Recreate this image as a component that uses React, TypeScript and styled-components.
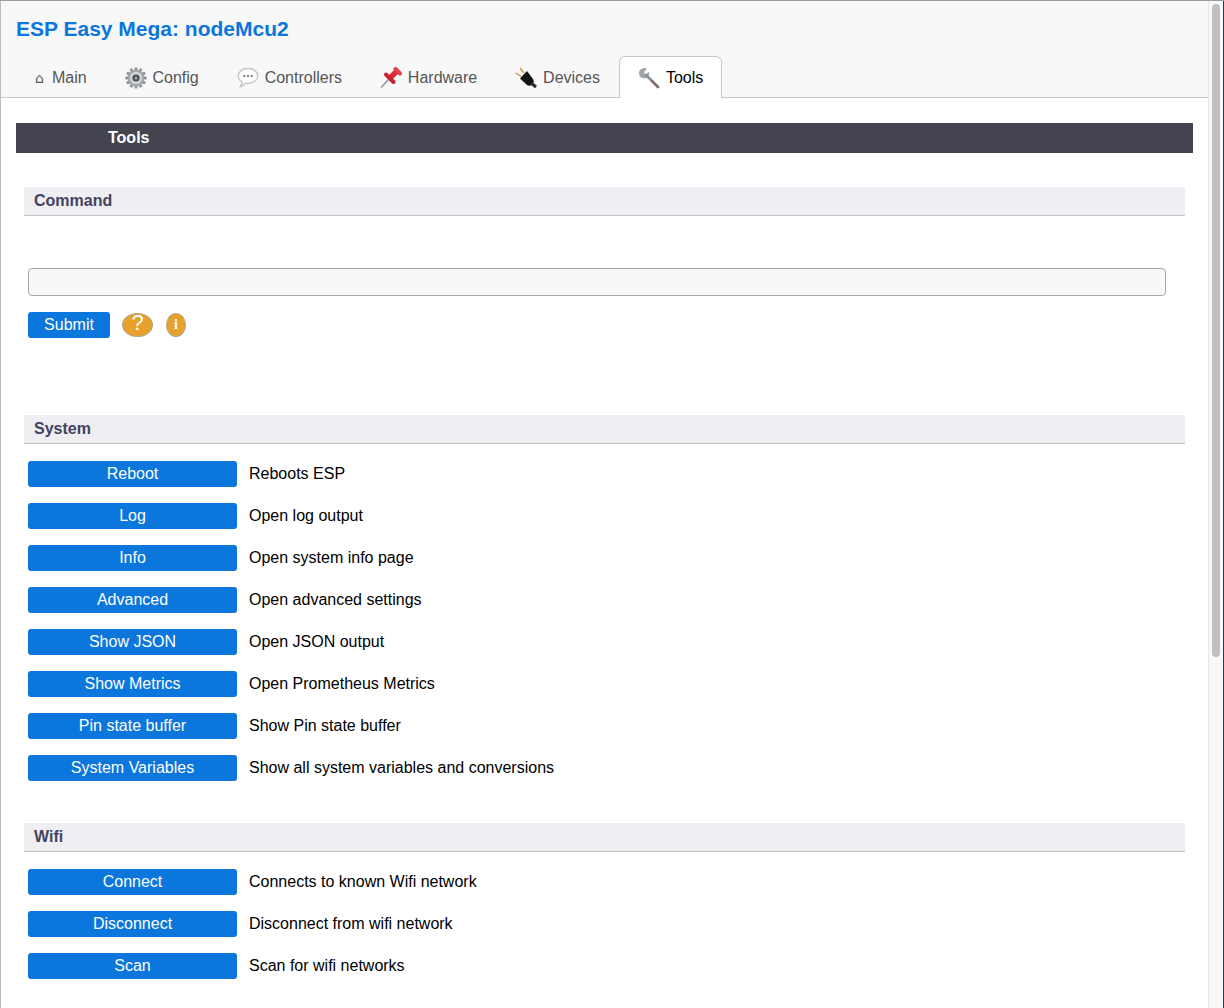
import React from "react";
import styled, { createGlobalStyle } from "styled-components";

const GlobalStyle = createGlobalStyle`
  html, body {
    margin: 0;
    padding: 0;
    height: 100%;
    overflow: hidden;
    background: #fff;
  }
  body {
    font-family: "Liberation Sans", Arial, sans-serif;
    font-size: 16px;
    color: #000;
  }
`;

const teeth = [0, 30, 60, 90, 120, 150, 180, 210, 240, 270, 300, 330];

const GearIcon = () => (
  <svg width="22" height="22" viewBox="0 0 22 22">
    {teeth.map((angle) => (
      <rect
        key={angle}
        x="9.5"
        y="0.4"
        width="3"
        height="5"
        rx="0.8"
        fill="#8f9397"
        transform={`rotate(${angle} 11 11)`}
      />
    ))}
    <circle cx="11" cy="11" r="8.2" fill="#a2a5a9" />
    <circle cx="11" cy="11" r="6.2" fill="#cfd1d3" />
    <circle cx="11" cy="11" r="3.6" fill="#4b4d50" />
    <circle cx="11" cy="11" r="1.5" fill="#a9abad" />
  </svg>
);

const BubbleIcon = () => (
  <svg width="22" height="22" viewBox="0 0 22 22">
    <path
      d="M11 1.500c5.400 0 9.800 3.200 9.800 7.400s-4.400 7.400-9.800 7.400c-.9 0-1.700-.1-2.500-.2-1.200 1.500-3 2.900-5.200 3.500 1-1.300 1.600-3 1.700-4.700C2.800 13.600 1.200 11.400 1.200 8.900c0-4.200 4.400-7.400 9.800-7.400z"
      fill="#fdfdfd"
      stroke="#c4c4c4"
      strokeWidth="1.300"
    />
    <circle cx="7.300" cy="9" r="1.100" fill="#666" />
    <circle cx="11" cy="9" r="1.100" fill="#666" />
    <circle cx="14.700" cy="9" r="1.100" fill="#666" />
  </svg>
);

const PinIcon = () => (
  <svg width="22" height="22" viewBox="0 0 22 22">
    <path d="M1 20.500l7.500-8" stroke="#84919f" strokeWidth="1.300" fill="none" />
    <path d="M16.500 4.500L10 11" stroke="#d92f3b" strokeWidth="5.500" fill="none" />
    <path d="M15.500 2l4.500 4.500" stroke="#e2404a" strokeWidth="4" strokeLinecap="round" fill="none" />
    <path d="M6 7.500l7.500 7.500" stroke="#c9252f" strokeWidth="4" strokeLinecap="round" fill="none" />
  </svg>
);

const PlugIcon = () => (
  <svg width="22" height="22" viewBox="0 0 22 22">
    <path d="M0.500 6l6 3.500M5 1l4 5" stroke="#c39a45" strokeWidth="1.400" fill="none" />
    <path d="M5 11.500l7-7.500 6 8 1 3-4 4-3-1z" fill="#141414" />
    <path d="M16 16l5 4" stroke="#2a2a2a" strokeWidth="3" fill="none" />
  </svg>
);

const WrenchIcon = () => (
  <svg width="22" height="22" viewBox="0 0 22 22">
    <path
      d="M6.200 1C3.200 1 1 3.300 1 6.200c0 3 2.300 5.100 5.100 5.100 3 0 5.100-2.300 5.100-5.100 0-.5-.1-1-.2-1.400L8 7.300 5.800 5.500 8.800 1.700C8 1.200 7.100 1 6.200 1z"
      fill="#a0a5ab"
    />
    <path d="M8.500 8.500l11.500 11.500" stroke="#8a8d92" strokeWidth="2.800" strokeLinecap="round" fill="none" />
    <path d="M14 14l6 6" stroke="#85696d" strokeWidth="2.200" strokeLinecap="round" fill="none" />
  </svg>
);

const tabs: { label: string; glyph?: string; icon?: React.ReactNode; active?: boolean }[] = [
  { label: "Main", glyph: "⌂" },
  { label: "Config", icon: <GearIcon /> },
  { label: "Controllers", icon: <BubbleIcon /> },
  { label: "Hardware", icon: <PinIcon /> },
  { label: "Devices", icon: <PlugIcon /> },
  { label: "Tools", icon: <WrenchIcon />, active: true },
];

const systemRows = [
  ["Reboot", "Reboots ESP"],
  ["Log", "Open log output"],
  ["Info", "Open system info page"],
  ["Advanced", "Open advanced settings"],
  ["Show JSON", "Open JSON output"],
  ["Show Metrics", "Open Prometheus Metrics"],
  ["Pin state buffer", "Show Pin state buffer"],
  ["System Variables", "Show all system variables and conversions"],
];

const wifiRows = [
  ["Connect", "Connects to known Wifi network"],
  ["Disconnect", "Disconnect from wifi network"],
  ["Scan", "Scan for wifi networks"],
];

const App = () => {
  return (
    <>
      <GlobalStyle />
      <Window>
        <Page>
          <Header>
            <Title>ESP Easy Mega: nodeMcu2</Title>
            <TabBar>
              {tabs.map((tab) => (
                <Tab key={tab.label} $active={tab.active}>
                  {tab.glyph ? <Glyph>{tab.glyph}</Glyph> : <TabIcon>{tab.icon}</TabIcon>}
                  {tab.label}
                </Tab>
              ))}
            </TabBar>
          </Header>
          <Main>
            <PageHead>Tools</PageHead>
            <Section>
              <SectionTitle>Command</SectionTitle>
              <CommandBox>
                <CommandInput type="text" />
                <SubmitRow>
                  <SubmitButton>Submit</SubmitButton>
                  <HelpButton>?</HelpButton>
                  <InfoButton>i</InfoButton>
                </SubmitRow>
              </CommandBox>
            </Section>
            <SystemSection>
              <SectionTitle>System</SectionTitle>
              <Rows>
                {systemRows.map(([label, text]) => (
                  <Row key={label}>
                    <WideButton>{label}</WideButton>
                    <RowText>{text}</RowText>
                  </Row>
                ))}
              </Rows>
            </SystemSection>
            <WifiSection>
              <SectionTitle>Wifi</SectionTitle>
              <Rows>
                {wifiRows.map(([label, text]) => (
                  <Row key={label}>
                    <WideButton>{label}</WideButton>
                    <RowText>{text}</RowText>
                  </Row>
                ))}
              </Rows>
            </WifiSection>
          </Main>
        </Page>
        <ScrollTrack>
          <ScrollThumb />
        </ScrollTrack>
      </Window>
    </>
  );
};

export default App;

const Window = styled.div`
  display: flex;
  width: 1224px;
  height: 1008px;
  overflow: hidden;
  border-top: 1px solid #9c9c9c;
  box-sizing: border-box;
`;

const Page = styled.div`
  width: 1208px;
  flex: none;
  border-left: 1px solid #bdbdbd;
  box-sizing: border-box;
`;

const Header = styled.header`
  height: 96px;
  background: #f8f8f8;
  border-bottom: 1px solid #c8c8c8;
  display: flex;
  flex-direction: column;
  justify-content: space-between;
`;

const Title = styled.h1`
  margin: 16px 0 0 15px;
  font-size: 21px;
  line-height: 23px;
  font-weight: 700;
  color: #0b76dc;
`;

const TabBar = styled.nav`
  display: flex;
  padding-left: 15px;
  margin-bottom: -1px;
`;

const Tab = styled.a<{ $active?: boolean }>`
  display: flex;
  align-items: center;
  gap: 6px;
  box-sizing: border-box;
  height: 42px;
  padding: 0 17.95px;
  font-size: 16px;
  color: ${(p) => (p.$active ? "#000" : "#555")};
  background: ${(p) => (p.$active ? "#fff" : "transparent")};
  border: 1px solid ${(p) => (p.$active ? "#c8c8c8" : "transparent")};
  border-bottom: none;
  border-radius: 6px 6px 0 0;
`;

const Glyph = styled.span`
  width: 11px;
  font-family: "DejaVu Sans", sans-serif;
  font-size: 14px;
`;

const TabIcon = styled.span`
  display: flex;
  width: 22px;
  height: 22px;
`;

const Main = styled.main`
  padding: 25px 15px 0;
`;

const PageHead = styled.h2`
  margin: 0;
  height: 30px;
  line-height: 30px;
  padding-left: 92px;
  background: #444450;
  color: #fff;
  font-size: 16px;
  font-weight: 700;
`;

const Section = styled.section`
  margin: 34px 8px 0;
`;

const SystemSection = styled(Section)`
  margin-top: 0;
`;

const WifiSection = styled(Section)`
  margin-top: 42px;
`;

const SectionTitle = styled.h3`
  margin: 0;
  height: 29px;
  line-height: 27px;
  padding-left: 10px;
  box-sizing: border-box;
  background: #eeeef3;
  border-bottom: 1px solid #c4c4c8;
  color: #43435f;
  font-size: 16px;
  font-weight: 700;
`;

const CommandBox = styled.div`
  padding: 52px 4px 0;
  height: 147px;
`;

const CommandInput = styled.input`
  display: block;
  width: 1138px;
  height: 28px;
  padding: 0 6px;
  margin: 0;
  box-sizing: border-box;
  background: #f8f8f8;
  border: 1px solid #a8a8a8;
  border-radius: 4px;
`;

const SubmitRow = styled.div`
  display: flex;
  align-items: center;
  margin-top: 16px;
`;

const BlueButton = styled.button`
  height: 26px;
  padding: 0;
  border: none;
  border-radius: 3px;
  background: #0b76dc;
  color: #fff;
  font-family: inherit;
  font-size: 16px;
  text-align: center;
`;

const SubmitButton = styled(BlueButton)`
  width: 82px;
`;

const WideButton = styled(BlueButton)`
  width: 209px;
  flex: none;
`;

const HelpButton = styled.span`
  width: 31px;
  height: 24px;
  margin-left: 12px;
  box-sizing: border-box;
  border: 1px solid #b3a58a;
  border-radius: 50%;
  background: #e8a22c;
  color: #fff;
  font-size: 22px;
  font-weight: 400;
  line-height: 18px;
  text-align: center;
`;

const InfoButton = styled(HelpButton)`
  width: 20px;
  margin-left: 13px;
  font-family: "Liberation Serif", serif;
  font-size: 14px;
  font-weight: 700;
  line-height: 22px;
`;

const Rows = styled.div`
  display: flex;
  flex-direction: column;
  gap: 16px;
  padding: 17px 4px 0;
`;

const Row = styled.div`
  display: flex;
  align-items: center;
  gap: 12px;
`;

const RowText = styled.span`
  font-size: 16px;
`;

const ScrollTrack = styled.div`
  flex: 1;
  background: #f8f8f8;
  border-left: 1px solid #e6e6e6;
  border-right: 1px solid #2b3a44;
  padding: 3px 3px 0 3px;
  box-sizing: border-box;
`;

const ScrollThumb = styled.div`
  width: 8px;
  height: 653px;
  background: #c0c0c0;
  border-radius: 4px;
`;
